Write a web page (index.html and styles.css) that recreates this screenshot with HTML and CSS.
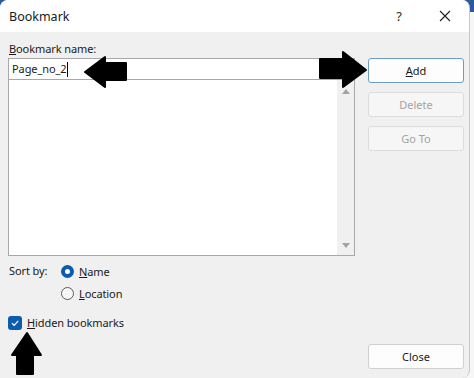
FILE: index.html
```html
<!DOCTYPE html>
<html lang="en">
<head>
    <meta charset="UTF-8">
    <meta name="viewport" content="width=device-width, initial-scale=1.0">
    <title>Bookmark</title>
    <link rel="stylesheet" href="styles.css">
</head>
<body>
    <div class="window">
        <div class="titlebar">
            <span class="title">Bookmark</span>
            <div class="title-actions">
                <span class="help">?</span>
                <svg class="close-x" width="12" height="12" viewBox="0 0 12 12">
                    <path d="M1 1 L11 11 M11 1 L1 11" stroke="#1f1f1f" stroke-width="1.1" fill="none"/>
                </svg>
            </div>
        </div>

        <div class="content">
            <div class="left">
                <label class="field-label"><u>B</u>ookmark name:</label>
                <div class="name-input">Page_no_2<span class="caret"></span></div>
                <div class="list">
                    <div class="list-items"></div>
                    <div class="scrollbar">
                        <svg width="8" height="6" viewBox="0 0 8 6"><path d="M0 6 L4 1 L8 6 Z" fill="#a3a3a3"/></svg>
                        <svg width="8" height="6" viewBox="0 0 8 6"><path d="M0 0 L4 5 L8 0 Z" fill="#a3a3a3"/></svg>
                    </div>
                </div>

                <div class="sort">
                    <span class="sort-label">Sort by:</span>
                    <div class="radios">
                        <div class="radio-row"><span class="radio checked"></span><span><u>N</u>ame</span></div>
                        <div class="radio-row"><span class="radio"></span><span><u>L</u>ocation</span></div>
                    </div>
                </div>

                <div class="check-row">
                    <span class="checkbox">
                        <svg width="10" height="10" viewBox="0 0 10 10"><path d="M2 5.2 L4.2 7.3 L8.2 2.8" stroke="#fff" stroke-width="1.2" fill="none"/></svg>
                    </span>
                    <span><u>H</u>idden bookmarks</span>
                </div>
            </div>

            <div class="buttons">
                <button class="btn default"><u>A</u>dd</button>
                <button class="btn" disabled>Delete</button>
                <button class="btn" disabled>Go To</button>
                <button class="btn close">Close</button>
            </div>
        </div>

        <!-- annotation arrows drawn over the dialog -->
        <svg class="arrows" width="474" height="378" viewBox="0 0 474 378">
            <polygon points="85,72 105,57 105,63 126,63 126,80 105,80 105,87" fill="#000" stroke="#000" stroke-width="2" stroke-linejoin="round"/>
            <polygon points="320,59 343,59 343,52 366,70 343,87 343,78 320,78" fill="#000" stroke="#000" stroke-width="2" stroke-linejoin="round"/>
            <polygon points="27,333 41,355 33,355 33,374 17,374 17,355 12,355" fill="#000" stroke="#000" stroke-width="2" stroke-linejoin="round"/>
        </svg>
    </div>
</body>
</html>
```

FILE: styles.css
```css
html, body {
    margin: 0;
    padding: 0;
}

body {
    width: 474px;
    height: 378px;
    overflow: hidden;
    background: linear-gradient(#2b5a9e 0, #2b5a9e 12px, #f6f6f6 12px);
    font-family: "Noto Sans", "Open Sans", sans-serif;
    font-size: 11px;
    letter-spacing: -0.1px;
    color: #1a1a1a;
}

.window {
    position: relative;
    width: 469px;
    height: 378px;
    background-color: #f0f0f0;
    border-right: 1px solid #c9c9c9;
    border-radius: 8px 8px 8px 0;
    overflow: hidden;
    display: flex;
    flex-direction: column;
}

.titlebar {
    height: 32px;
    background-color: #fff;
    display: flex;
    align-items: center;
    justify-content: space-between;
    padding-left: 9px;
    flex-shrink: 0;
}

.title {
    font-size: 12.5px;
    letter-spacing: 0;
    color: #1a1a1a;
}

.title-actions {
    display: flex;
    align-items: center;
}

.help {
    font-size: 13px;
    width: 20px;
    text-align: center;
    margin-right: 30px;
    color: #2a2a2a;
}

.close-x {
    margin-right: 18px;
}

.content {
    flex: 1;
    display: flex;
    padding: 0 0 8px 8px;
}

.left {
    width: 347px;
    display: flex;
    flex-direction: column;
}

.field-label {
    margin-top: 8px;
    height: 18px;
    line-height: 18px;
    padding-left: 1px;
}

.name-input {
    height: 22px;
    box-sizing: border-box;
    border: 1px solid #a8a8a8;
    background-color: #fff;
    padding-left: 3px;
    line-height: 20px;
    display: flex;
    align-items: center;
}

.caret {
    display: inline-block;
    width: 1px;
    height: 15px;
    background-color: #000;
    margin-left: 1px;
}

.list {
    height: 176px;
    box-sizing: border-box;
    border: 1px solid #a8a8a8;
    border-top: none;
    background-color: #fff;
    display: flex;
}

.list-items {
    flex: 1;
}

.scrollbar {
    width: 17px;
    background-color: #f0f0f0;
    display: flex;
    flex-direction: column;
    justify-content: space-between;
    align-items: center;
    padding: 8px 0 6px;
}

.sort {
    display: flex;
    margin-top: 7px;
}

.sort-label {
    width: 52px;
    padding-left: 1px;
    line-height: 16px;
}

.radios {
    display: flex;
    flex-direction: column;
    gap: 6px;
}

.radio-row {
    display: flex;
    align-items: center;
    gap: 5px;
    height: 16px;
}

.radio {
    width: 13px;
    height: 13px;
    box-sizing: border-box;
    border-radius: 50%;
    border: 1px solid #5c5c5c;
    background-color: #f7f7f7;
}

.radio.checked {
    border: 4px solid #0b5cad;
    background-color: #fff;
}

.check-row {
    display: flex;
    align-items: center;
    gap: 5px;
    margin-top: 14px;
}

.checkbox {
    width: 14px;
    height: 14px;
    border-radius: 3px;
    background-color: #0b5cad;
    display: flex;
    align-items: center;
    justify-content: center;
}

.buttons {
    width: 96px;
    margin-left: 13px;
    padding-top: 26px;
    display: flex;
    flex-direction: column;
    gap: 9px;
}

.btn {
    height: 25px;
    width: 96px;
    box-sizing: border-box;
    font-family: "Noto Sans", "Open Sans", sans-serif;
    font-size: 11px;
    color: #1a1a1a;
    background-color: #fdfdfd;
    border: 1px solid #d0d0d0;
    border-radius: 3px;
    padding: 0;
}

.btn.default {
    border-color: #6c9dc6;
}

.btn:disabled {
    color: #a3a3a3;
    background-color: #f6f6f6;
    border-color: #dcdcdc;
}

.btn.close {
    margin-top: auto;
    margin-bottom: 1px;
}

.arrows {
    position: absolute;
    left: 0;
    top: 0;
    pointer-events: none;
}
```
